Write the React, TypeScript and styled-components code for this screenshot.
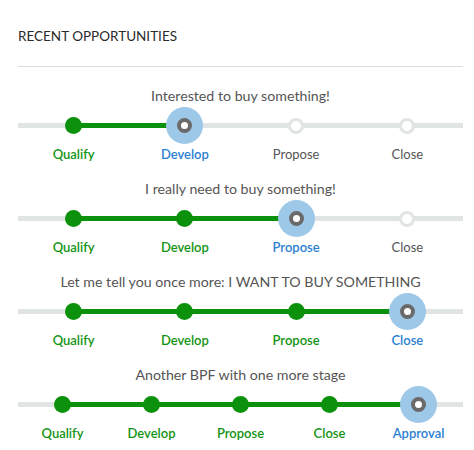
import styled, { createGlobalStyle } from 'styled-components';

type Opportunity = {
  title: string;
  stages: string[];
  active: number;
};

type StageState = 'done' | 'active' | 'todo';

const opportunities: Opportunity[] = [
  {
    title: 'Interested to buy something!',
    stages: ['Qualify', 'Develop', 'Propose', 'Close'],
    active: 1,
  },
  {
    title: 'I really need to buy something!',
    stages: ['Qualify', 'Develop', 'Propose', 'Close'],
    active: 2,
  },
  {
    title: 'Let me tell you once more: I WANT TO BUY SOMETHING',
    stages: ['Qualify', 'Develop', 'Propose', 'Close'],
    active: 3,
  },
  {
    title: 'Another BPF with one more stage',
    stages: ['Qualify', 'Develop', 'Propose', 'Close', 'Approval'],
    active: 4,
  },
];

const GlobalStyle = createGlobalStyle`
  body {
    margin: 0;
    background: #fff;
    font-family: 'Segoe UI', Lato, 'Open Sans', sans-serif;
  }
`;

const Page = styled.div`
  padding: 26px 11px 0 18px;
`;

const Header = styled.h2`
  margin: 0;
  font-size: 13.5px;
  line-height: 20px;
  font-weight: 400;
  color: #2b2b2b;
`;

const Divider = styled.hr`
  border: none;
  border-top: 1px solid #dcdcdc;
  margin: 20px 0 19px;
`;

const List = styled.div`
  display: flex;
  flex-direction: column;
  gap: 16px;
`;

const Row = styled.section`
  display: flex;
  flex-direction: column;
`;

const Title = styled.div`
  text-align: center;
  font-size: 14.2px;
  line-height: 20px;
  color: #555;
  margin-bottom: 1px;
`;

const Track = styled.div<{ $count: number }>`
  position: relative;
  display: grid;
  grid-template-columns: repeat(${p => p.$count}, 1fr);
  height: 36px;
  align-items: center;
  justify-items: center;

  &:before {
    content: '';
    position: absolute;
    left: 0;
    right: 0;
    top: 16px;
    height: 5px;
    background: #e0e4e4;
  }
`;

const Progress = styled.div`
  position: absolute;
  top: 16px;
  height: 5px;
  background: #0b910b;
`;

const Node = styled.div<{ $state: StageState }>`
  position: relative;
  z-index: 1;
  border-radius: 50%;
  box-sizing: border-box;
  display: flex;
  align-items: center;
  justify-content: center;
  ${p =>
    p.$state === 'done' &&
    `
    width: 17px;
    height: 17px;
    background: #0b910b;
  `}
  ${p =>
    p.$state === 'todo' &&
    `
    width: 16px;
    height: 16px;
    background: #fff;
    border: 3px solid #e0e4e4;
  `}
  ${p =>
    p.$state === 'active' &&
    `
    width: 37px;
    height: 37px;
    background: #9dc8e8;
  `}
`;

const Ring = styled.div`
  width: 15px;
  height: 15px;
  box-sizing: border-box;
  border-radius: 50%;
  border: 4px solid #6a6a6a;
  background: #fff;
`;

const Labels = styled.div<{ $count: number }>`
  display: grid;
  grid-template-columns: repeat(${p => p.$count}, 1fr);
  margin-top: 2px;
`;

const Label = styled.div<{ $state: StageState }>`
  text-align: center;
  font-size: 13px;
  line-height: 18px;
  font-weight: ${p => (p.$state === 'todo' ? 400 : 600)};
  color: ${p =>
    p.$state === 'done' ? '#149414' : p.$state === 'active' ? '#2c7fd1' : '#555'};
`;

const stateOf = (i: number, active: number): StageState =>
  i < active ? 'done' : i === active ? 'active' : 'todo';

const ProcessRow = ({ item }: { item: Opportunity }) => {
  const n = item.stages.length;
  const left = (0.5 / n) * 100;
  const right = ((item.active + 0.5) / n) * 100;
  return (
    <Row>
      <Title>{item.title}</Title>
      <Track $count={n}>
        <Progress style={{ left: `${left}%`, width: `${right - left}%` }} />
        {item.stages.map((stage, i) => {
          const state = stateOf(i, item.active);
          return (
            <Node key={stage} $state={state}>
              {state === 'active' && <Ring />}
            </Node>
          );
        })}
      </Track>
      <Labels $count={n}>
        {item.stages.map((stage, i) => (
          <Label key={stage} $state={stateOf(i, item.active)}>
            {stage}
          </Label>
        ))}
      </Labels>
    </Row>
  );
};

export default function App() {
  return (
    <>
      <GlobalStyle />
      <Page>
        <Header>RECENT OPPORTUNITIES</Header>
        <Divider />
        <List>
          {opportunities.map(item => (
            <ProcessRow key={item.title} item={item} />
          ))}
        </List>
      </Page>
    </>
  );
}
